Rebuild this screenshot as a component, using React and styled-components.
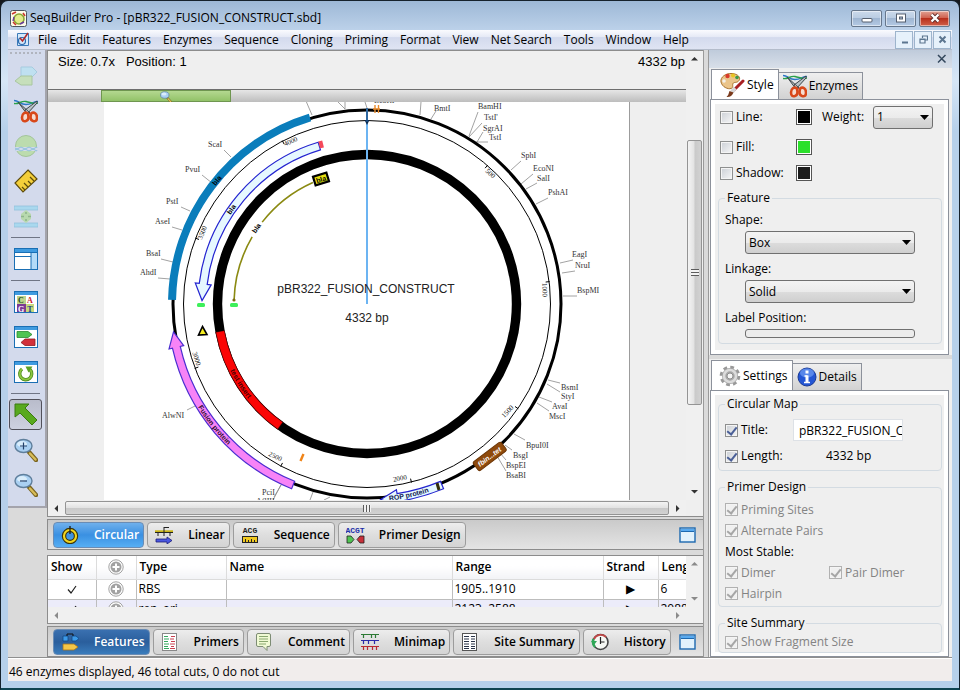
import React from "react";
import styled, { createGlobalStyle, css } from "styled-components";

/* ---------- data ---------- */

const MENUS = [
  "File", "Edit", "Features", "Enzymes", "Sequence", "Cloning", "Priming",
  "Format", "View", "Net Search", "Tools", "Window", "Help",
];

// restriction sites: name, label x / y, then the leader line
const SITES = [
  ["ScaI", 208, 147, 224, 150, 231, 157],
  ["PvuI", 185, 172, 202, 175, 212, 183],
  ["PstI", 166, 204, 181, 207, 190, 211],
  ["AseI", 155, 224, 172, 227, 182, 230],
  ["BsaI", 146, 256, 161, 259, 173, 262],
  ["AhdI", 140, 275, 158, 278, 170, 279],
  ["AlwNI", 162, 418, 187, 410, 197, 405],
  ["PciI", 262, 495, 281, 485, 274, 497],
  ["AflIII", 256, 504, 281, 485, 273, 500],
  ["EcoRI", 374, 103, 365, 102, 367, 108],
  ["BmtI", 434, 111, 436, 111, 431, 119],
  ["BamHI", 478, 109, 478, 112, 469, 136],
  ["TstI'", 484, 120, 482, 123, 469, 137],
  ["SgrAI", 483, 131, 483, 132, 477, 142],
  ["TstI", 489, 140, 488, 142, 476, 142],
  ["SphI", 521, 158, 521, 161, 511, 170],
  ["EcoNI", 533, 171, 533, 174, 521, 184],
  ["SalI", 537, 181, 537, 183, 526, 189],
  ["PshAI", 548, 195, 548, 198, 536, 204],
  ["EagI", 572, 257, 573, 260, 560, 263],
  ["NruI", 575, 268, 575, 271, 562, 273],
  ["BspMI", 577, 293, 577, 296, 563, 296],
  ["BsmI", 561, 390, 560, 383, 548, 380],
  ["StyI", 561, 399, 560, 392, 547, 384],
  ["AvaI", 552, 409, 552, 402, 539, 397],
  ["MscI", 549, 419, 549, 411, 537, 403],
  ["BpuI0I", 526, 448, 525, 440, 514, 434],
  ["BsgI", 513, 458, 512, 450, 505, 445],
  ["BspEI", 506, 468, 506, 460, 500, 453],
  ["BsaBI", 506, 478, 506, 471, 497, 456],
];

// scale: label, tick angle, label centre, label rotation
const SCALE = [
  ["500", 41, 490, 174, 43],
  ["1000", 83, 544, 290, 88],
  ["1500", 124.7, 508, 412, -46],
  ["2000", 166, 400, 479, -10],
  ["2500", 208, 275, 457, 26],
  ["3000", 249.5, 196, 359, 72],
  ["3500", 291, 203, 233, -68],
  ["4000", 332.6, 291, 142, -24],
];

/* ---------- text inside drawings ---------- */

const SiteText = styled.g`
  font: 8px "Liberation Serif", serif;
  fill: #333;
`;

const ScaleText = styled.text`
  font: 7px "Liberation Serif", serif;
  fill: #111;
  text-anchor: middle;
  dominant-baseline: middle;
`;

const FeatureText = styled.text`
  font-family: "Liberation Sans", sans-serif;
  font-size: 7px;
  font-weight: bold;
  text-anchor: middle;
`;

const MapTitle = styled.text`
  font: 12px "Liberation Sans", sans-serif;
  fill: #222;
  text-anchor: middle;
`;

const BaseText = styled.text`
  font: bold 8px "Liberation Serif", serif;
  text-anchor: middle;
`;

const AcgText = styled.text`
  font: bold 8px "Liberation Mono", monospace;
  text-anchor: middle;
`;

/* ---------- plasmid map ---------- */

const CX = 367;
const CY = 304;

const at = (r, deg) => {
  const a = (deg * Math.PI) / 180;
  return `${(CX + r * Math.sin(a)).toFixed(2)} ${(CY - r * Math.cos(a)).toFixed(2)}`;
};

const arc = (r, from, to) =>
  `M${at(r, from)}A${r} ${r} 0 0 ${to > from ? 1 : 0} ${at(r, to)}`;

const arrow = (r, half, head, from, neck, tip) => {
  const cw = tip > from ? 1 : 0;
  const o = r + half;
  const i = r - half;
  return (
    `M${at(o, from)}A${o} ${o} 0 0 ${cw} ${at(o, neck)}` +
    `L${at(r + head, neck)}L${at(r, tip)}L${at(r - head, neck)}L${at(i, neck)}` +
    `A${i} ${i} 0 0 ${1 - cw} ${at(i, from)}Z`
  );
};

const PlasmidMap = () => (
  <svg viewBox="104 102 525 398" width="525" height="398">
    <defs>
      <path id="p-bla-outer" d={arc(192, 275, 340)} />
      <path id="p-bla-mid" d={arc(163, 275, 340)} />
      <path id="p-insert" d={arc(152, 258, 214)} />
      <path id="p-fusion" d={arc(198, 258, 203)} />
      <path id="p-rop" d={arc(198, 176, 157)} />
    </defs>

    <g stroke="#8a8a8a" strokeWidth="0.8">
      {SITES.map(([name, , , x1, y1, x2, y2]) => (
        <line key={name} x1={x1} y1={y1} x2={x2} y2={y2} />
      ))}
      <path d="M306 101l6 14M338 102l7 7v-7M421 102l-1 13M313 492l-3 8M330 497l-6 3" fill="none" />
    </g>
    <SiteText>
      {SITES.map(([name, x, y]) => (
        <text key={name} x={x} y={y}>{name}</text>
      ))}
    </SiteText>

    <circle cx={CX} cy={CY} r="194" fill="none" stroke="#000" strokeWidth="3" />
    <circle cx={CX} cy={CY} r="183.5" fill="none" stroke="#000" strokeWidth="1" />
    <circle cx={CX} cy={CY} r="149.5" fill="none" stroke="#000" strokeWidth="9.4" />

    {SCALE.map(([label, deg, x, y, rot]) => (
      <g key={label}>
        <path d={`M${at(184, deg)}L${at(180, deg)}`} stroke="#000" />
        <ScaleText x={x} y={y} transform={`rotate(${rot} ${x} ${y})`}>{label}</ScaleText>
      </g>
    ))}

    <path d={arc(195, 271.2, 343)} fill="none" stroke="#0a7dbb" strokeWidth="8" />
    <path d={arc(149.5, 259.5, 215.4)} fill="none" stroke="#500" strokeWidth="9.4" />
    <path d={arc(149.5, 259.3, 215.6)} fill="none" stroke="#fb0505" strokeWidth="8" />

    <path d={arrow(165, 4, 8, 343.2, 277, 271.2)} fill="#e6f8ff" stroke="#2424d0" strokeWidth="1.2" />
    <rect x="319" y="141" width="4" height="7" fill="#f5485a" transform="rotate(-14 321 144)" />

    <path d={arrow(195.5, 4, 7.5, 202.2, 257.2, 261.8)} fill="#f783f7" stroke="#4a2ed0" strokeWidth="1.2" />

    <g fill="none" stroke="#8b8a12" strokeWidth="1.6">
      <path d={arc(133, 271.5, 300.3)} />
      <path d={arc(133, 308, 336)} />
    </g>
    <circle cx="234" cy="300" r="1.6" fill="#7a6a10" />
    <g transform="rotate(-17 321 179)">
      <rect x="314" y="174.5" width="14" height="9" fill="#e6e010" stroke="#000" strokeWidth="2.2" />
      <FeatureText x="321" y="182">bla</FeatureText>
    </g>
    <rect x="197" y="303" width="8" height="4" rx="1.5" fill="#3df05a" />
    <rect x="230" y="303" width="8" height="4" rx="1.5" fill="#3df05a" />
    <path d="M202.5 326.500l4.500 8-8.500 0.500z" fill="#f6ee20" stroke="#000" strokeWidth="1.6" />
    <path d="M303.5 454l-3 7" stroke="#f08418" strokeWidth="2.4" />
    <path d="M375 105v8M378.5 105v8M373 109h7" stroke="#e88a2a" strokeWidth="1.4" fill="none" />

    <FeatureText><textPath href="#p-bla-outer" startOffset="53%">bla</textPath></FeatureText>
    <FeatureText><textPath href="#p-bla-mid" startOffset="46%">bla</textPath></FeatureText>
    <FeatureText x="256" y="231" transform="rotate(-55 256 228)">bla</FeatureText>
    <FeatureText fill="#400"><textPath href="#p-insert" startOffset="46%">test insert</textPath></FeatureText>
    <FeatureText fill="#301030"><textPath href="#p-fusion" startOffset="48%">Fusion protein</textPath></FeatureText>

    <g transform="rotate(-37 489.5 456)">
      <rect x="472" y="451" width="35" height="11" rx="2" fill="#8f4a0c" stroke="#6b3505" />
      <FeatureText x="489" y="459" fill="#fff" fontStyle="italic">fbin...tet</FeatureText>
    </g>

    <path d={arrow(196, 4, 8, 157.5, 171, 176)} fill="#e6f8ff" stroke="#2424d0" strokeWidth="1.2" />
    <path d="M437 483l2 7" stroke="#332f08" strokeWidth="3" />
    <FeatureText fill="#111a50"><textPath href="#p-rop" startOffset="44%">ROP protein</textPath></FeatureText>

    <path d="M367 108V304" stroke="#6cb4f2" strokeWidth="2" />
    <path d="M364.5 120h5l-2.5 5z" fill="#0b2a50" />
    <path d="M367 108v14" stroke="#1a4f86" strokeWidth="1.5" />

    <MapTitle x="366" y="293">pBR322_FUSION_CONSTRUCT</MapTitle>
    <MapTitle x="367" y="322">4332 bp</MapTitle>
  </svg>
);

/* ---------- icons ---------- */

const Scissors = ({ size = 24 }) => (
  <svg width={size} height={size} viewBox="0 0 24 24">
    <path d="M0 1.5c5 0 6 4 12 4s7-3 12-3" fill="none" stroke="#2b78c8" strokeWidth="1.4" />
    <path d="M0 4.5c5 1 7-3 12-2s8 3 12 1.5" fill="none" stroke="#29a04a" strokeWidth="1.4" />
    <path d="M4 3l12 11-3 1zM23 2L11 11l2 4 10-11z" fill="#b9c2c6" stroke="#3d4548" />
    <g fill="#f6dcd0" stroke="#d8481a" strokeWidth="2.6">
      <path d="M14 14.5c-3-2-6 0-6 4s2 4 4 3.500 2.500-2 2.500-4z" />
      <path d="M17 14.5c3-2 6 0 6 4s-2 4-4 3.500-2.500-2-2.500-4z" />
    </g>
  </svg>
);

const WindowFrame = ({ children, size = 24 }) => (
  <svg width={size} height={size} viewBox="0 0 24 24">
    <rect x="0.5" y="1.5" width="23" height="21" fill="#fff" stroke="#1a6fb4" />
    <path d="M1 2h22v3H1z" fill="#3f9be0" />
    {children}
  </svg>
);

const PaneIcon = () => (
  <svg width="17" height="16" viewBox="0 0 17 16">
    <rect x="1" y="1" width="15" height="14" fill="#e2f2fc" stroke="#1d69b0" strokeWidth="1.4" />
    <path d="M2 2h13v2H2z" fill="#58aaf0" />
    <path d="M2 4.5h13" stroke="#1d69b0" />
  </svg>
);

const Magnifier = ({ sign, size = 24 }) => (
  <svg width={size} height={size} viewBox="0 0 24 24">
    <path d="M15 14l7 8" stroke="#7a6420" strokeWidth="4.4" strokeLinecap="round" />
    <path d="M16 15.5l5.500 6" stroke="#d8bd58" strokeWidth="2.4" strokeLinecap="round" />
    <ellipse cx="9.5" cy="8" rx="8.5" ry="6.5" fill="#a9d0f2" stroke="#5f7f9c" strokeWidth="1.4" />
    <ellipse cx="8" cy="6" rx="5" ry="3" fill="#d9edfb" />
    {sign && <path d={sign === "+" ? "M6 8h7M9.5 4.5v7" : "M6 8h7"} stroke="#22406a" strokeWidth="1.2" />}
  </svg>
);

const TOOLS = [
  {
    name: "Pair primers",
    art: (
      <svg width="24" height="24" viewBox="0 0 24 24">
        <path d="M7 3h11l5 5-5 5H7z" fill="#bfe0f0" stroke="#a6cbdf" />
        <path d="M18 12H7l-6 5 6 4h11z" fill="#c6dfbb" stroke="#a9c6a0" />
      </svg>
    ),
  },
  { name: "Cut", art: <Scissors /> },
  {
    name: "Mutate",
    art: (
      <svg width="24" height="24" viewBox="0 0 24 24">
        <circle cx="12" cy="12" r="10.5" fill="#bcdcae" stroke="#a3c49a" />
        <path d="M0 13h24v4H0z" fill="#d3daec" />
        <path d="M1 14q2 2 4 0t4 0 4 0 4 0 4 0 2 0M1 16q2-2 4 0t4 0 4 0 4 0 4 0 2 0" fill="none" stroke="#8fc0dc" />
      </svg>
    ),
  },
  {
    name: "Ruler",
    art: (
      <svg width="24" height="24" viewBox="0 0 24 24">
        <path d="M14 1l9 9L9 23l-8-9z" fill="#f4cf3a" stroke="#5e4c0c" strokeWidth="1.2" />
        <path d="M20 12l-4-4M17 15l-3-3M14 18l-4-4M11 21l-3-3" stroke="#5e4c0c" strokeWidth="1.2" />
      </svg>
    ),
  },
  {
    name: "Fit height",
    art: (
      <svg width="24" height="24" viewBox="0 0 24 24">
        <path d="M0 2h24v4H0zM0 19h24v4H0z" fill="#a9d8ee" stroke="#92c2dc" strokeWidth="0.8" />
        <path d="M12 6l5 4v5l-5 4-5-4v-5z" fill="#b8d9ae" />
        <path d="M7 12.5h3M14 12.5h3M12 8v2M12 15v2" stroke="#8fb58c" strokeWidth="1.6" />
      </svg>
    ),
  },
  {
    name: "Layout",
    divider: true,
    art: (
      <WindowFrame>
        <path d="M17 5h6v17h-6z" fill="#b4dbf8" />
        <path d="M1 5.5h22M1 9.5h16M17 5v17" stroke="#1a6fb4" />
      </WindowFrame>
    ),
  },
  {
    name: "Bases",
    divider: true,
    art: (
      <WindowFrame>
        <path d="M3 6h9v8H3z" fill="#bfd48c" />
        <path d="M3 14h9v8H3z" fill="#7b3a94" />
        <path d="M12 14h8v8h-8z" fill="#c8d87c" />
        <BaseText x="7" y="13" fill="#1c4a22">C</BaseText>
        <BaseText x="16" y="13" fill="#c8202a">A</BaseText>
        <BaseText x="7" y="22" fill="#fff">G</BaseText>
        <BaseText x="16" y="22" fill="#1d3c8a">T</BaseText>
      </WindowFrame>
    ),
  },
  {
    name: "Primers",
    art: (
      <WindowFrame>
        <path d="M3 6.500h11l4 3-4 3H3z" fill="#4fc452" stroke="#2a8a30" strokeWidth="0.8" />
        <path d="M21 14H11l-4 3.500 4 3h10z" fill="#d2303a" stroke="#8e1c22" strokeWidth="0.8" />
      </WindowFrame>
    ),
  },
  {
    name: "Refresh",
    art: (
      <WindowFrame>
        <path d="M8 9a6 6 0 1 0 8 0.500" fill="none" stroke="#4c8c20" strokeWidth="3.4" />
        <path d="M8 9a6 6 0 1 0 8 0.500" fill="none" stroke="#8cc63f" strokeWidth="1.8" />
        <path d="M11.5 6.5h7l-4 6z" fill="#5ca026" />
      </WindowFrame>
    ),
  },
  {
    name: "Select",
    divider: true,
    active: true,
    art: (
      <svg width="24" height="24" viewBox="0 0 24 24">
        <path d="M1 1h14l-4 4 12 12-5 5L6 10l-5 4z" fill="#58a91e" stroke="#3b7a12" />
      </svg>
    ),
  },
  { name: "Zoom in", art: <Magnifier sign="+" /> },
  { name: "Zoom out", art: <Magnifier sign="-" /> },
];

const VIEW_TABS = [
  {
    name: "Circular",
    tone: "sky",
    art: (
      <svg width="19" height="18" viewBox="0 0 19 18">
        <circle cx="9" cy="10" r="6" fill="none" stroke="#3b3408" strokeWidth="4.4" />
        <circle cx="9" cy="10" r="6" fill="none" stroke="#f2d520" strokeWidth="2.2" />
        <path d="M9 0v8" stroke="#222" strokeWidth="1.4" />
      </svg>
    ),
  },
  {
    name: "Linear",
    art: (
      <svg width="19" height="18" viewBox="0 0 19 18">
        <path d="M0 5.5h18" stroke="#c8b416" strokeWidth="2.4" />
        <path d="M0 6.5h18M3 6v4M9 1v9M15 6v4M9 1.5h5" stroke="#222" fill="none" />
        <path d="M1 13h11v-2l5 3.5-5 3.5v-2H1z" fill="#4a58e0" stroke="#1c1c78" strokeWidth="0.8" />
      </svg>
    ),
  },
  {
    name: "Sequence",
    art: (
      <svg width="19" height="18" viewBox="0 0 19 18">
        <AcgText x="9" y="7" fill="#222">ACG</AcgText>
        <rect x="1.5" y="10.5" width="15" height="6" fill="#f0c820" stroke="#222" />
        <path d="M4.5 16v-3M7.5 16v-2M10.5 16v-3M13.5 16v-2" stroke="#222" />
      </svg>
    ),
  },
  {
    name: "Primer Design",
    art: (
      <svg width="19" height="18" viewBox="0 0 19 18">
        <AcgText x="9" y="7" fill="#1c2fa8">ACGT</AcgText>
        <path d="M1 10h4l3 3.5L5 17H1z" fill="#4fc452" stroke="#222" strokeWidth="0.8" />
        <path d="M18 10h-4l-3 3.5 3 3.5h4z" fill="#c8303a" stroke="#222" strokeWidth="0.8" />
      </svg>
    ),
  },
];

const DETAIL_TABS = [
  {
    name: "Features",
    tone: "navy",
    art: (
      <svg width="19" height="18" viewBox="0 0 19 18">
        <path d="M2 3h5v5H2zM11 3h4l3 2.5-3 2.5h-4z" fill="#3c9ae8" stroke="#124a86" strokeWidth="0.8" />
        <path d="M6 3V1h6v2" fill="none" stroke="#111" />
        <path d="M2 11h11l4 3-4 3H2z" fill="#f4c648" stroke="#a8741a" strokeWidth="0.8" />
      </svg>
    ),
  },
  {
    name: "Primers",
    art: (
      <svg width="19" height="18" viewBox="0 0 19 18">
        <rect x="1.5" y="0.5" width="14" height="17" fill="#fff" stroke="#888" />
        <path d="M3 3.5h4M3 6h5M3 8.5h4M3 11h5M3 13.5h4M3 15.5h5" stroke="#35a860" strokeWidth="1.2" />
        <path d="M10 3.5h4M9 6h4M10 8.5h4M9 11h5M10 13.5h3M9 15.5h5" stroke="#c84050" strokeWidth="1.2" />
      </svg>
    ),
  },
  {
    name: "Comment",
    art: (
      <svg width="19" height="18" viewBox="0 0 19 18">
        <path d="M3 0.5h11q1.5 0 1.5 1.5v10q0 1.5-1.5 1.5h-2v4l-4-4H3Q1.5 13.5 1.5 12V2Q1.5 0.5 3 0.5z" fill="#f0fad4" stroke="#7d8c74" />
        <path d="M4 3.5h9M4 6h9M4 8.5h9M4 11h7" stroke="#8aa870" />
      </svg>
    ),
  },
  {
    name: "Minimap",
    art: (
      <svg width="19" height="18" viewBox="0 0 19 18">
        <path d="M0 1.5h18M2.5 1v4M10.5 1v4M14.5 1v4" stroke="#2c7a34" strokeWidth="1.2" />
        <path d="M0 7.5h18M2.5 7v4M7.5 7v4M13.5 7v4" stroke="#2a2aa8" strokeWidth="1.2" />
        <path d="M0 13.5h18M2.5 13v4M6.5 13v4M11.5 13v4M15.5 13v4" stroke="#b82a30" strokeWidth="1.2" />
      </svg>
    ),
  },
  {
    name: "Site Summary",
    art: (
      <svg width="19" height="18" viewBox="0 0 19 18">
        <rect x="1.5" y="0.5" width="14" height="17" fill="#fff" stroke="#555" />
        <path d="M3 3.5h5M3 6h5M3 8.5h5M3 11h5M3 13.5h5M3 15.5h5M10 3.5h4M10 6h4M10 8.5h4M10 11h4M10 13.5h4M10 15.5h4" stroke="#2a3448" strokeWidth="1.2" />
      </svg>
    ),
  },
  {
    name: "History",
    art: (
      <svg width="19" height="18" viewBox="0 0 19 18">
        <circle cx="9.5" cy="9" r="7.5" fill="#f6f8f4" stroke="#444" strokeWidth="1.6" />
        <path d="M15 4a7.5 7.5 0 0 0-12 2" fill="none" stroke="#c04848" strokeWidth="1.8" />
        <path d="M2.5 6a7.5 7.5 0 0 0 1.5 8" fill="none" stroke="#2fa858" strokeWidth="2.4" />
        <path d="M0 8h6l-3 4z" fill="#2fa858" />
        <path d="M9.5 4v5h4M9.5 9v2" stroke="#222" strokeWidth="1.2" fill="none" />
      </svg>
    ),
  },
];

const StyleIcon = () => (
  <svg width="26" height="26" viewBox="0 0 26 26">
    <path d="M2 10C1 5 7 1 13 1.5s9 4 7 7-5 1-6 3 1 4-2 5S3 15 2 10z" fill="#eac48a" stroke="#a8722c" />
    <circle cx="8.5" cy="4" r="2.2" fill="#d83a2a" />
    <circle cx="14" cy="3.5" r="2" fill="#e8c620" />
    <circle cx="18" cy="5.5" r="1.8" fill="#3a9a4a" />
    <circle cx="5" cy="9" r="1.8" fill="#f4f0e8" />
    <path d="M24 9l-9 9" stroke="#a81f22" strokeWidth="3" strokeLinecap="round" />
    <path d="M16 16l-3 4" stroke="#d6d6d6" strokeWidth="4" />
    <path d="M14.5 20.5q-2 5-7 4.5 2-1.5 3-6z" fill="#7a3a1c" />
  </svg>
);

const GearIcon = () => (
  <svg width="22" height="22" viewBox="0 0 22 22">
    <circle cx="11" cy="11" r="8.5" fill="none" stroke="#999" strokeWidth="3.6" strokeDasharray="3.6 3.076" />
    <circle cx="11" cy="11" r="5.5" fill="none" stroke="#a8a8a8" strokeWidth="5" />
    <circle cx="11" cy="11" r="6" fill="none" stroke="#dcdcdc" strokeWidth="2.6" />
    <circle cx="11" cy="11" r="3" fill="#f6f6f6" stroke="#8e8e8e" />
  </svg>
);

const InfoIcon = () => (
  <svg width="20" height="20" viewBox="0 0 20 20">
    <circle cx="10" cy="10" r="9" fill="#2456d4" stroke="#1a3a94" />
    <ellipse cx="10" cy="6" rx="7" ry="4.5" fill="#6f9cf4" opacity="0.7" />
    <path d="M10 3.5v3M10 8.5v7.5" stroke="#fff" strokeWidth="3" />
    <path d="M7.500 9h3M7 15.500h6" stroke="#fff" strokeWidth="1.400" />
  </svg>
);

const PlusBadge = () => (
  <svg width="16" height="16" viewBox="0 0 16 16">
    <circle cx="8" cy="8" r="7.2" fill="#fff" stroke="#a2a2a2" />
    <circle cx="8" cy="8" r="5.5" fill="#a2a2a2" />
    <path d="M8 4.5v7M4.5 8h7" stroke="#fff" strokeWidth="2" />
  </svg>
);

const Tick = () => (
  <svg width="10" height="9" viewBox="0 0 10 9">
    <path d="M1 4.500l3 3.500 5-7" fill="none" stroke="#222" strokeWidth="1.200" />
  </svg>
);

const Triangle = ({ dir, dim }) => {
  const shapes = {
    up: "M1 5.5l3.5-3.500L8 5.5z",
    down: "M1 3l3.5 3.5L8 3z",
    left: "M6 1L2.5 4.5 6 8z",
    right: "M3 1l3.5 3.5L3 8z",
  };
  return (
    <svg width="9" height="9" viewBox="0 0 9 9">
      <path d={shapes[dir]} fill={dim ? "#8a8a8a" : "#333"} />
    </svg>
  );
};

/* ---------- pieces ---------- */

const ScrollBar = ({ vertical, before, size, after, dim, label }) => (
  <Bar $vertical={vertical}>
    <BarButton $vertical={vertical} aria-label={`${label} back`}>
      <Triangle dir={vertical ? "up" : "left"} dim={dim} />
    </BarButton>
    <BarSpace $grow={before} />
    {size > 0 && (
      <BarThumb $grow={size} $vertical={vertical}>
        <Grip $vertical={vertical} />
      </BarThumb>
    )}
    <BarSpace $grow={after} />
    <BarButton $vertical={vertical} aria-label={`${label} forward`}>
      <Triangle dir={vertical ? "down" : "right"} dim={dim} />
    </BarButton>
  </Bar>
);

const TabStrip = ({ tabs }) => (
  <Strip>
    <StripTabs>
      {tabs.map((tab) => (
        <StripTab key={tab.name} $tone={tab.tone}>
          {tab.art}
          {tab.name}
        </StripTab>
      ))}
    </StripTabs>
    <FlatButton aria-label="Maximize pane"><PaneIcon /></FlatButton>
  </Strip>
);

const Check = ({ id, label, checked, disabled }) => (
  <CheckLabel htmlFor={id} $disabled={disabled}>
    <CheckBox id={id} type="checkbox" defaultChecked={checked} disabled={disabled} />
    {label}
  </CheckLabel>
);

const Choice = ({ id, value }) => (
  <ChoiceWrap>
    <ChoiceSelect id={id} defaultValue={value}>
      <option>{value}</option>
    </ChoiceSelect>
    <svg width="9" height="5" viewBox="0 0 9 5"><path d="M0 0h9L4.5 5z" fill="#000" /></svg>
  </ChoiceWrap>
);

const App = () => {
  return (
    <>
      <GlobalStyle />
      <Frame>
        <TitleBar>
          <svg width="17" height="17" viewBox="0 0 17 17">
            <rect x="0.5" y="0.5" width="16" height="16" rx="2" fill="#fdfbe8" stroke="#4c5560" />
            <circle cx="9" cy="9" r="5" fill="#e2ec8a" stroke="#8aa636" strokeWidth="1.6" />
            <path d="M2 4l4-2M3 12l3 3M13 3l2 3" stroke="#c8382e" strokeWidth="1.6" />
            <path d="M4 7l-1 4M10 14l4-2" stroke="#6c3ca0" strokeWidth="1.4" />
          </svg>
          <TitleText>SeqBuilder Pro - [pBR322_FUSION_CONSTRUCT.sbd]</TitleText>
          <WinButton aria-label="Minimize">
            <svg width="12" height="10" viewBox="0 0 12 10"><rect x="1" y="5.5" width="10" height="3.5" rx="1" fill="#fff" stroke="#555f6e" /></svg>
          </WinButton>
          <WinButton aria-label="Maximize">
            <svg width="12" height="10" viewBox="0 0 12 10">
              <rect x="1.5" y="1" width="9" height="8" fill="#fff" stroke="#555f6e" />
              <rect x="4.5" y="4" width="3" height="2" fill="#a9bdd6" stroke="#555f6e" />
            </svg>
          </WinButton>
          <WinButton $close aria-label="Close">
            <svg width="12" height="10" viewBox="0 0 12 10">
              <path d="M2.5 1.5l7 7M9.5 1.5l-7 7" stroke="#5e2a28" strokeWidth="4" />
              <path d="M2.5 1.5l7 7M9.5 1.5l-7 7" stroke="#fff" strokeWidth="2.4" />
            </svg>
          </WinButton>
        </TitleBar>

        <MenuBar>
          <svg width="14" height="15" viewBox="0 0 14 15">
            <path d="M1.5 1.5h11v12h-11z" fill="#d4e8fa" stroke="#3b7ab8" />
            <circle cx="6" cy="9" r="3.5" fill="none" stroke="#2a6ab0" strokeWidth="1.2" />
            <path d="M12 1L6.5 9 4 6" fill="none" stroke="#b02a2a" strokeWidth="1.6" />
          </svg>
          <MenuList>
            {MENUS.map((name) => (
              <MenuItem key={name}>{name}</MenuItem>
            ))}
          </MenuList>
          <MdiButton aria-label="Minimize document">
            <svg width="9" height="9" viewBox="0 0 9 9"><path d="M2 7.5h6" stroke="#5c7690" strokeWidth="2" /></svg>
          </MdiButton>
          <MdiButton aria-label="Restore document">
            <svg width="9" height="9" viewBox="0 0 9 9"><path d="M3.5 3V1h5v4h-2M1 4h5v4H1zM1 4.5h5" fill="none" stroke="#5c7690" strokeWidth="1.2" /></svg>
          </MdiButton>
          <MdiButton aria-label="Close document">
            <svg width="9" height="9" viewBox="0 0 9 9"><path d="M1.5 1.5l6 6M7.5 1.5l-6 6" stroke="#5c7690" strokeWidth="2" /></svg>
          </MdiButton>
        </MenuBar>

        <Workspace>
          <ToolColumn>
            <ToolBar>
              <ToolGrip />
              {TOOLS.map((tool) => (
                <React.Fragment key={tool.name}>
                  {tool.divider && <ToolRule />}
                  <ToolButton $active={tool.active} aria-label={tool.name}>{tool.art}</ToolButton>
                </React.Fragment>
              ))}
            </ToolBar>
          </ToolColumn>

          <MainColumn>
            <Viewer>
              <ViewerRow>
                <ViewerBody>
                  <ViewerInfo>
                    <span>Size: 0.7x&nbsp;&nbsp; Position: 1</span>
                    <span>4332 bp</span>
                  </ViewerInfo>
                  <Overview>
                    <BarSpace $grow={53} />
                    <OverviewThumb><Magnifier size={12} /></OverviewThumb>
                    <BarSpace $grow={455} />
                  </Overview>
                  <Canvas>
                    <Paper><PlasmidMap /></Paper>
                  </Canvas>
                </ViewerBody>
                <ScrollBar vertical before={72} size={264} after={78} label="Map vertical" />
              </ViewerRow>
              <CornerRow>
                <ScrollBar before={0} size={602} after={0} label="Map horizontal" />
              </CornerRow>
            </Viewer>
            <TabStrip tabs={VIEW_TABS} />

            <TablePane>
              <TableRowBox>
                <TableClip>
                  <FeatureTable>
                    <colgroup>
                      <Col $w={48} /><Col $w={40} /><Col $w={90} /><Col /><Col $w={151} /><Col $w={55} /><Col $w={70} />
                    </colgroup>
                    <thead>
                      <tr>
                        <th>Show</th>
                        <Centered as="th"><PlusBadge /></Centered>
                        <th>Type</th>
                        <th>Name</th>
                        <th>Range</th>
                        <th>Strand</th>
                        <th>Length</th>
                      </tr>
                    </thead>
                    <tbody>
                      <tr>
                        <Centered><Tick /></Centered>
                        <Centered><PlusBadge /></Centered>
                        <td>RBS</td>
                        <td />
                        <td>1905..1910</td>
                        <Centered>▶</Centered>
                        <td>6</td>
                      </tr>
                      <tr>
                        <Centered><Tick /></Centered>
                        <Centered><PlusBadge /></Centered>
                        <td>rep_ori</td>
                        <td />
                        <td>2123..2588</td>
                        <Centered>▶</Centered>
                        <td>2088</td>
                      </tr>
                    </tbody>
                  </FeatureTable>
                </TableClip>
                <ScrollBar vertical before={0} size={0} after={1} dim label="Table vertical" />
              </TableRowBox>
              <CornerRow>
                <ScrollBar before={0} size={0} after={1} dim label="Table horizontal" />
              </CornerRow>
            </TablePane>
            <TabStrip tabs={DETAIL_TABS} />
          </MainColumn>

          <SideColumn>
            <SideHeader>
              <FlatButton aria-label="Close panel">
                <svg width="10" height="10" viewBox="0 0 10 10"><path d="M1 1l7.5 7.5M8.5 1L1 8.5" stroke="#33475c" strokeWidth="1.5" /></svg>
              </FlatButton>
            </SideHeader>

            <SideTabs>
              <SideTab $on><StyleIcon />Style</SideTab>
              <SideTab><Scissors />Enzymes</SideTab>
            </SideTabs>
            <SidePanel>
              <StyleGrid>
                <Check id="line" label="Line:" />
                <Swatch $color="#000" aria-label="Line color" />
                <label htmlFor="weight">Weight:</label>
                <Choice id="weight" value="1" />
                <Check id="fill" label="Fill:" />
                <Swatch $color="#2be02b" aria-label="Fill color" />
                <i /><i />
                <Check id="shadow" label="Shadow:" />
                <Swatch $color="#1c1c1c" aria-label="Shadow color" />
              </StyleGrid>
              <Group>
                <legend>Feature</legend>
                <FieldStack>
                  <label htmlFor="shape">Shape:</label>
                  <Indent><Choice id="shape" value="Box" /></Indent>
                  <label htmlFor="linkage">Linkage:</label>
                  <Indent><Choice id="linkage" value="Solid" /></Indent>
                  <label htmlFor="labelpos">Label Position:</label>
                  <Indent><SlimSelect id="labelpos" /></Indent>
                </FieldStack>
              </Group>
            </SidePanel>

            <SideTabs $lower>
              <SideTab $on><GearIcon />Settings</SideTab>
              <SideTab><InfoIcon />Details</SideTab>
            </SideTabs>
            <SidePanel $fill>
              <Group>
                <legend>Circular Map</legend>
                <MapGrid>
                  <Check id="title" label="Title:" checked />
                  <TitleInput aria-label="Title text" defaultValue="pBR322_FUSION_CONSTRUCT" />
                  <Check id="length" label="Length:" checked />
                  <LengthText>4332 bp</LengthText>
                </MapGrid>
              </Group>
              <Group>
                <legend>Primer Design</legend>
                <PrimerGrid>
                  <Check id="priming" label="Priming Sites" checked disabled />
                  <i />
                  <Check id="alternate" label="Alternate Pairs" checked disabled />
                  <i />
                  <span>Most Stable:</span>
                  <i />
                  <Check id="dimer" label="Dimer" checked disabled />
                  <Check id="pairdimer" label="Pair Dimer" checked disabled />
                  <Check id="hairpin" label="Hairpin" checked disabled />
                </PrimerGrid>
              </Group>
              <Group>
                <legend>Site Summary</legend>
                <SummaryRow>
                  <Check id="fragment" label="Show Fragment Size" checked disabled />
                </SummaryRow>
              </Group>
            </SidePanel>
          </SideColumn>
        </Workspace>

        <StatusBar>46 enzymes displayed, 46 total cuts, 0 do not cut</StatusBar>
      </Frame>
    </>
  );
};

/* ---------- styles ---------- */

const GlobalStyle = createGlobalStyle`
  * {
    box-sizing: border-box;
  }
  body {
    margin: 0;
    background: #15191d;
    color: #000;
    font: 12px/16px "Open Sans", "Noto Sans", sans-serif;
  }
  button, input, select {
    font: inherit;
    color: inherit;
    margin: 0;
    padding: 0;
  }
  svg {
    display: block;
    flex: none;
  }
`;

const Frame = styled.div`
  display: flex;
  flex-direction: column;
  height: 100vh;
  padding: 0 7px 7px;
  border: 1px solid #16222c;
  border-bottom: 2px solid #0f4450;
  border-radius: 8px 8px 0 0;
  background: linear-gradient(#9db8d6, #bdd2ea 30px, #d6e6f6 80px, #b6d0ea 130px);
  overflow: hidden;
`;

const TitleBar = styled.header`
  flex: none;
  display: flex;
  align-items: center;
  gap: 3px;
  height: 29px;
  padding: 5px 2px 0;
`;

const TitleText = styled.div`
  flex: 1;
  white-space: nowrap;
`;

const WinButton = styled.button`
  display: grid;
  place-items: center;
  width: 31px;
  height: 17px;
  border: 1px solid #66778c;
  border-radius: 2px;
  box-shadow: inset 0 0 0 1px rgba(255, 255, 255, 0.5);
  background: ${({ $close }) =>
    $close
      ? "linear-gradient(#e0a294, #cf5f4c 48%, #b8301c 50%, #d0604a)"
      : "linear-gradient(#ccdaeb, #b9cce2 48%, #9fb6d2 50%, #b4cae4)"};
`;

const MenuBar = styled.nav`
  flex: none;
  display: flex;
  align-items: center;
  gap: 1px;
  height: 20px;
  padding: 0 1px 0 8px;
  background: linear-gradient(#fafbfe, #e6eaf6 35%, #d3daed 40%, #dfe4f3);
  border-bottom: 1px solid #b4bccb;
`;

const MenuList = styled.div`
  flex: 1;
  display: flex;
  padding-left: 1px;
`;

const MenuItem = styled.button`
  padding: 0 6px;
  border: 0;
  background: none;
  white-space: nowrap;
`;

const MdiButton = styled.button`
  display: grid;
  place-items: center;
  width: 18px;
  height: 18px;
  border: 1px solid #9db4cc;
  background: #e6f1fb;
`;

const Workspace = styled.div`
  flex: 1;
  min-height: 0;
  display: grid;
  grid-template-columns: 39px minmax(0, 1fr) 244px;
  background: #dadada;
  border-bottom: 1px solid #8f8f8f;
`;

const ToolColumn = styled.div`
  min-height: 0;
`;

const ToolBar = styled.div`
  display: flex;
  flex-direction: column;
  align-items: center;
  padding: 2px 2px 4px 0;
  background: #d3daec;
  border: 1px solid #a4a4ac;
  border-width: 0 2px 2px 0;
`;

const ToolGrip = styled.div`
  align-self: stretch;
  height: 6px;
  margin: 0 2px;
  border-top: 2px dotted #b0b4be;
`;

const ToolButton = styled.button`
  display: grid;
  place-items: center;
  width: 33px;
  height: 35px;
  border: 0;
  background: none;
  ${({ $active }) =>
    $active &&
    css`
      height: 31px;
      margin: 2px 0;
      border: 1px solid #50505a;
      border-radius: 3px;
      background: linear-gradient(#b9bccb, #cdd1e0);
    `}
`;

const ToolRule = styled.hr`
  width: 29px;
  height: 1px;
  margin: 4px 0 3px;
  border: 0;
  background: #6f7585;
`;

const MainColumn = styled.main`
  display: flex;
  flex-direction: column;
  min-width: 0;
  min-height: 0;
  border-right: 1px solid #9a9a9a;
  background: #dadada;
  margin-right: 4px;
`;

const Viewer = styled.section`
  flex: 1;
  min-height: 0;
  display: flex;
  flex-direction: column;
  border: 1px solid #8c8c8c;
  border-width: 1px 0 1px 1px;
  background: #efefef;
`;

const ViewerRow = styled.div`
  flex: 1;
  min-height: 0;
  display: flex;
`;

const ViewerBody = styled.div`
  flex: 1;
  min-width: 0;
  display: flex;
  flex-direction: column;
`;

const ViewerInfo = styled.div`
  display: flex;
  justify-content: space-between;
  height: 39px;
  padding: 3px 1px 0 10px;
  font: 13px/16px "Liberation Sans", sans-serif;
  border-bottom: 1px solid #6e6e6e;
`;

const Overview = styled.div`
  flex: none;
  display: flex;
  height: 12px;
  background: linear-gradient(#e6e6e6, #bdbdbd);
`;

const OverviewThumb = styled.div`
  flex: 128 0 0;
  display: grid;
  place-items: center;
  border: 1px solid #6f9650;
  background: linear-gradient(#b4d890, #92c268);
`;

const Canvas = styled.div`
  flex: 1;
  min-height: 0;
  display: flex;
  justify-content: center;
  overflow: hidden;
`;

const Paper = styled.div`
  flex: none;
  background: #fff;
  border-right: 1px solid #9c9c9c;
`;

const Bar = styled.div`
  flex: ${({ $vertical }) => ($vertical ? "none" : "1")};
  display: flex;
  flex-direction: ${({ $vertical }) => ($vertical ? "column" : "row")};
  ${({ $vertical }) => ($vertical ? "width: 17px;" : "height: 16px;")}
  background: #f0f0f0;
`;

const BarButton = styled.button`
  flex: none;
  display: grid;
  place-items: center;
  width: 17px;
  height: ${({ $vertical }) => ($vertical ? "17px" : "16px")};
  border: 0;
  background: none;
`;

const BarSpace = styled.div`
  flex: ${({ $grow }) => $grow} 0 0;
`;

const BarThumb = styled.div`
  flex: ${({ $grow }) => $grow} 0 0;
  display: grid;
  place-items: center;
  margin: ${({ $vertical }) => ($vertical ? "0 1px" : "1px 0")};
  border: 1px solid #949494;
  border-radius: 2px;
  background: linear-gradient(${({ $vertical }) => ($vertical ? "90deg" : "180deg")}, #f4f4f4, #e2e2e2 48%, #c9c9c9 52%, #d2d2d2);
`;

const Grip = styled.div`
  width: 8px;
  height: 7px;
  background: repeating-linear-gradient(
    ${({ $vertical }) => ($vertical ? "180deg" : "90deg")},
    #5c5c5c 0 1px,
    #f2f2f2 1px 3px
  );
`;

const CornerRow = styled.div`
  flex: none;
  display: flex;
  padding-right: 17px;
`;

const Strip = styled.div`
  flex: none;
  display: flex;
  align-items: center;
  gap: 8px;
  height: 31px;
  margin-top: 2px;
  padding: 0 7px 0 5px;
  border: 1px solid #8c8c8c;
  border-width: 1px 0 1px 1px;
  background: linear-gradient(#cacaca, #e4e4e4);
`;

const StripTabs = styled.div`
  flex: 1;
  min-width: 0;
  display: flex;
  gap: 3px;
  overflow: hidden;
`;

const tones = {
  sky: "linear-gradient(#6fb0ec, #3a90e2 50%, #56aef4)",
  navy: "linear-gradient(#3a70b0, #2a5e9c 50%, #3a7cbc)",
};

const StripTab = styled.button`
  flex: none;
  display: flex;
  align-items: center;
  gap: 14px;
  height: 26px;
  padding: 0 4px 0 7px;
  border: 1px solid ${({ $tone }) => ($tone ? "#6a8cb4" : "#9c9c9c")};
  border-radius: 4px;
  background: ${({ $tone }) => tones[$tone] || "linear-gradient(#ededed, #dedede 50%, #d4d4d4)"};
  color: ${({ $tone }) => ($tone ? "#fff" : "#000")};
  font-weight: 600;
  white-space: nowrap;
`;

const FlatButton = styled.button`
  border: 0;
  background: none;
`;

const TablePane = styled.section`
  flex: none;
  margin-top: 5px;
  border: 1px solid #8c8c8c;
  border-width: 1px 0 1px 1px;
  background: #f0f0f0;
`;

const TableRowBox = styled.div`
  display: flex;
  height: 51px;
`;

const TableClip = styled.div`
  flex: 1;
  min-width: 0;
  overflow: hidden;
  background: #fff;
`;

const FeatureTable = styled.table`
  width: calc(100% + 42px);
  table-layout: fixed;
  border-collapse: collapse;
  th, td {
    height: 20px;
    padding: 0 2px;
    border: 1px solid #bdbdbd;
    border-width: 0 0 1px 1px;
    text-align: left;
    white-space: nowrap;
  }
  th {
    height: 23px;
    padding: 0 3px;
    border-color: #dcdcdc;
    font-weight: 600;
    background: linear-gradient(#fff 45%, #f2f3f6);
  }
  th:first-child, td:first-child {
    border-left: 0;
  }
  tbody tr:nth-child(2) {
    background: #ececfa;
  }
`;

const Col = styled.col`
  width: ${({ $w }) => ($w ? `${$w}px` : "auto")};
`;

const Centered = styled.td`
  && {
    text-align: center;
  }
  svg {
    margin: 0 auto;
  }
`;

const SideColumn = styled.aside`
  display: flex;
  flex-direction: column;
  min-height: 0;
  padding: 0 3px 0 1px;
  border-left: 1px solid #9a9a9a;
  background: #efefef;
`;

const SideHeader = styled.div`
  flex: none;
  display: flex;
  justify-content: flex-end;
  align-items: center;
  height: 18px;
  margin: 0 -3px 0 -1px;
  padding-right: 5px;
  background: linear-gradient(#bfcbdb, #d8dfe9);
`;

const SideTabs = styled.div`
  flex: none;
  display: flex;
  align-items: flex-end;
  height: ${({ $lower }) => ($lower ? "35px" : "31px")};
  padding-left: 1px;
  ${({ $lower }) => $lower && "border-top: 4px solid #dadada; margin: 0 -3px 0 -1px; padding-left: 2px;"}
`;

const SideTab = styled.button`
  display: flex;
  align-items: center;
  gap: 2px;
  height: ${({ $on }) => ($on ? "30px" : "27px")};
  padding: 0 4px 0 ${({ $on }) => ($on ? "7px" : "4px")};
  border: 1px solid #8c919b;
  border-bottom: 0;
  background: ${({ $on }) => ($on ? "#fff" : "linear-gradient(#efefef, #d2d2d2)")};
  white-space: nowrap;
  & + & {
    border-left: 0;
  }
`;

const SidePanel = styled.div`
  flex: ${({ $fill }) => ($fill ? "1" : "none")};
  min-height: 0;
  padding: ${({ $fill }) => ($fill ? "5px" : "0")} 5px 2px;
  border: 1px solid #8c919b;
  box-shadow: inset 0 0 0 4px #fff;
  background: #efefef;
`;

const StyleGrid = styled.div`
  display: grid;
  grid-template-columns: 76px 26px 51px 60px;
  grid-template-rows: 34px 26px 26px;
  align-items: center;
  padding: 0 0 4px 4px;
`;

const Swatch = styled.button`
  width: 16px;
  height: 16px;
  border: 1px solid #555;
  box-shadow: inset 0 0 0 1px #fff;
  background: ${({ $color }) => $color};
`;

const Group = styled.fieldset`
  min-width: 0;
  margin: 0 1px 8px 2px;
  padding: 0 6px 2px;
  border: 1px solid #d3dbe2;
  border-radius: 4px;
  legend {
    padding: 0 2px;
  }
`;

const FieldStack = styled.div`
  display: flex;
  flex-direction: column;
  padding-top: 6px;
`;

const Indent = styled.div`
  display: flex;
  flex-direction: column;
  padding: 3px 20px 7px;
  &:last-child {
    padding-bottom: 3px;
  }
`;

const ChoiceWrap = styled.div`
  display: grid;
  align-items: center;
  & > * {
    grid-area: 1 / 1;
  }
  svg {
    justify-self: end;
    margin-right: 4px;
    pointer-events: none;
  }
`;

const ChoiceSelect = styled.select`
  appearance: none;
  width: 100%;
  height: 23px;
  padding: 0 3px;
  border: 1px solid #707070;
  border-radius: 3px;
  background: linear-gradient(#f3f3f3, #ebebeb 50%, #dcdcdc 52%, #cfcfcf);
`;

const SlimSelect = styled.select`
  appearance: none;
  height: 9px;
  border: 1px solid #707070;
  border-radius: 3px;
  background: #ececec;
`;

const CheckLabel = styled.label`
  display: flex;
  align-items: center;
  gap: 3px;
  white-space: nowrap;
  color: ${({ $disabled }) => ($disabled ? "#838383" : "#000")};
`;

const CheckBox = styled.input`
  appearance: none;
  flex: none;
  display: grid;
  justify-items: center;
  width: 13px;
  height: 13px;
  border: 1px solid #8e8f8f;
  box-shadow: inset 0 0 0 1px #f4f4f4;
  background: linear-gradient(135deg, #cbcfd5, #f6f6f6);
  &:checked::after {
    content: "";
    width: 4px;
    height: 8px;
    border: solid #4a5f97;
    border-width: 0 2px 2px 0;
    transform: rotate(38deg);
  }
  &:disabled {
    border-color: #b1b1b1;
    background: #f0f0f0;
  }
  &:disabled::after {
    border-color: #a6a6a6;
  }
`;

const MapGrid = styled.div`
  display: grid;
  grid-template-columns: 68px 110px;
  grid-template-rows: 28px 24px;
  align-items: center;
  padding-top: 4px;
`;

const TitleInput = styled.input`
  width: 110px;
  height: 22px;
  padding: 0 0 0 5px;
  border: 1px solid #dde1e6;
  background: #fff;
`;

const LengthText = styled.span`
  padding-left: 33px;
`;

const PrimerGrid = styled.div`
  display: grid;
  grid-template-columns: 104px 1fr;
  grid-auto-rows: 21px;
  align-items: center;
  padding-top: 4px;
`;

const SummaryRow = styled.div`
  padding-top: 3px;
`;

const StatusBar = styled.footer`
  flex: none;
  height: 23px;
  padding: 5px 1px 0;
  border-top: 1px solid #fff;
  background: #f1edec;
`;

export default App;
